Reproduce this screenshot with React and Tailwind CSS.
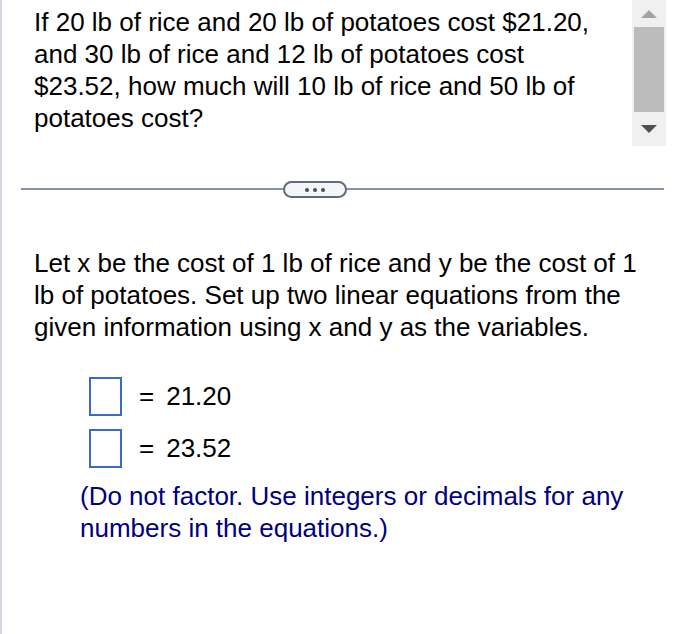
export default function App() {
  return (
    <div className="relative w-[674px] h-[634px] bg-white overflow-hidden border-l-2 border-[#d3d8e3]" style={{ fontFamily: '"Liberation Sans", Arial, sans-serif' }}>
      <div className="flex h-[146px]">
        <div className="flex-1 pl-[32px] pt-[6px] text-[26px] leading-[32px] text-black">
          If 20 lb of rice and 20 lb of potatoes cost $21.20,<br />
          and 30 lb of rice and 12 lb of potatoes cost<br />
          $23.52, how much will 10 lb of rice and 50 lb of<br />
          potatoes cost?
        </div>
        <div className="w-[34px] mr-[8px] bg-[#f0f0f0] flex flex-col items-center">
          <div className="h-[27px] flex items-center justify-center">
            <div className="w-0 h-0 border-l-[8px] border-r-[8px] border-b-[8px] border-l-transparent border-r-transparent border-b-[#a3a3a3]" />
          </div>
          <div className="w-[30px] h-[85px] bg-[#bcbcbc]" />
          <div className="flex-1 flex items-center justify-center">
            <div className="w-0 h-0 border-l-[8px] border-r-[8px] border-t-[8px] border-l-transparent border-r-transparent border-t-[#505050]" />
          </div>
        </div>
      </div>

      <div className="relative mt-[35px] ml-[19px] mr-[10px] h-[16px] flex items-center">
        <div className="w-full h-[2px] bg-[#8a93a6]" />
        <div className="absolute left-[262px] top-0 w-[64px] h-[17px] rounded-full border-2 border-[#5f6b7f] bg-[#f4f5f7] flex items-center justify-center gap-[4px]">
          <span className="w-[4px] h-[4px] rounded-full bg-[#4a4f5a]" />
          <span className="w-[4px] h-[4px] rounded-full bg-[#4a4f5a]" />
          <span className="w-[4px] h-[4px] rounded-full bg-[#4a4f5a]" />
        </div>
      </div>

      <div className="pl-[32px] pt-[50px] text-[26px] leading-[32px] text-black">
        Let x be the cost of 1 lb of rice and y be the cost of 1<br />
        lb of potatoes. Set up two linear equations from the<br />
        given information using x and y as the variables.
      </div>

      <div className="pl-[87px] pt-[34px] flex flex-col gap-[13px] text-[26px] text-black">
        <div className="flex items-center h-[39px]">
          <div className="w-[33px] h-[39px] border-2 border-[#3a6bc8]" />
          <span className="ml-[17px]">=</span>
          <span className="ml-[12px]">21.20</span>
        </div>
        <div className="flex items-center h-[39px]">
          <div className="w-[33px] h-[39px] border-2 border-[#3a6bc8]" />
          <span className="ml-[17px]">=</span>
          <span className="ml-[12px]">23.52</span>
        </div>
      </div>

      <div className="pl-[78px] pt-[12px] text-[26px] leading-[32px] text-[#000080]">
        (Do not factor. Use integers or decimals for any<br />
        numbers in the equations.)
      </div>
    </div>
  );
}
